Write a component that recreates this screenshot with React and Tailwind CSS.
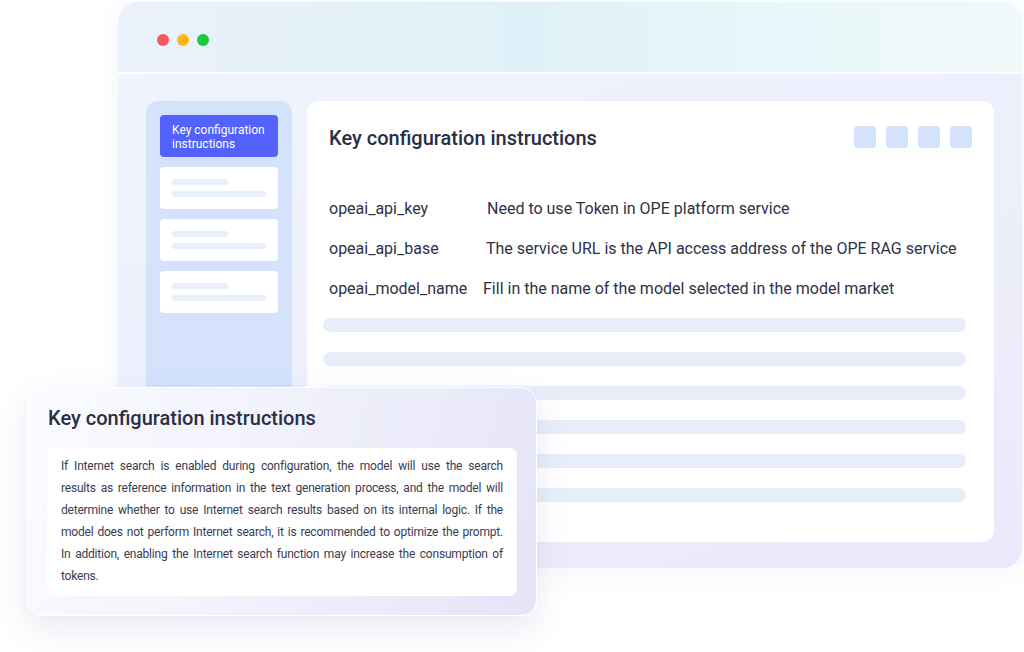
import React from "react";

const rows = [
  { k: "opeai_api_key", v: "Need to use Token in OPE platform service", w: "w-[158px]" },
  { k: "opeai_api_base", v: "The service URL is the API access address of the OPE RAG service", w: "w-[157px]" },
  { k: "opeai_model_name", v: "Fill in the name of the model selected in the model market", w: "w-[154px]" },
];

const lines = [
  "If Internet search is enabled during configuration, the model will use the search",
  "results as reference information in the text generation process, and the model will",
  "determine whether to use Internet search results based on its internal logic. If the",
  "model does not perform Internet search, it is recommended to optimize the prompt.",
  "In addition, enabling the Internet search function may increase the consumption of",
];

function SideCard() {
  return (
    <div className="h-[42px] rounded-[4px] bg-white px-[12px] pt-[12px] flex flex-col gap-[6px]">
      <div className="h-[6px] w-[56px] rounded-full bg-[#e8eefa]" />
      <div className="h-[6px] w-[94px] rounded-full bg-[#e8eefa]" />
    </div>
  );
}

export default function App() {
  return (
    <div className="relative w-[1024px] h-[652px] overflow-hidden bg-white font-['Roboto',sans-serif]">
      <div className="ml-[118px] mt-[2px] w-[904px] h-[566px] rounded-[20px] overflow-hidden flex flex-col shadow-[0_4px_24px_rgba(120,130,200,0.08)]">
        <div className="h-[72px] shrink-0 border-b-2 border-white bg-[linear-gradient(90deg,#ebf1fb_0%,#dff1f8_45%,#e8f7f9_75%,#f0f8fa_100%)] pl-[39px] pt-[32px] flex gap-[8px]">
          <div className="w-[12px] h-[12px] rounded-full bg-[#f65b5b]" />
          <div className="w-[12px] h-[12px] rounded-full bg-[#fdb913]" />
          <div className="w-[12px] h-[12px] rounded-full bg-[#1ec740]" />
        </div>
        <div className="flex-1 bg-[linear-gradient(160deg,#eff4fd_0%,#edeffc_50%,#ebe8fb_100%)] px-[28px] pt-[27px] pb-[26px] flex gap-[15px]">
          <div className="w-[146px] rounded-[12px] bg-[#d4e2fc] p-[14px] flex flex-col gap-[10px]">
            <div className="h-[42px] rounded-[4px] bg-[#5262fb] px-[12px] pt-[8px] text-[12px] leading-[14px] text-white">
              Key configuration instructions
            </div>
            <SideCard />
            <SideCard />
            <SideCard />
          </div>
          <div className="flex-1 rounded-[12px] bg-white">
            <div className="h-[24px] mt-[25px] px-[22px] flex items-center justify-between">
              <div className="text-[20px] leading-[24px] font-medium text-[#2a2e45]">Key configuration instructions</div>
              <div className="flex gap-[10px] -mt-[2px]">
                <div className="w-[22px] h-[22px] rounded-[4px] bg-[#d4e2fc]" />
                <div className="w-[22px] h-[22px] rounded-[4px] bg-[#d4e2fc]" />
                <div className="w-[22px] h-[22px] rounded-[4px] bg-[#d4e2fc]" />
                <div className="w-[22px] h-[22px] rounded-[4px] bg-[#d4e2fc]" />
              </div>
            </div>
            <div className="mt-[39px] px-[22px] flex flex-col">
              {rows.map((r) => (
                <div key={r.k} className="h-[40px] flex items-center text-[16px] text-[#2e3148]">
                  <div className={r.w + " shrink-0"}>{r.k}</div>
                  <div className="whitespace-nowrap">{r.v}</div>
                </div>
              ))}
            </div>
            <div className="mt-[9px] pl-[16px] pr-[28px] flex flex-col gap-[20px]">
              {[0, 1, 2, 3, 4, 5].map((i) => (
                <div key={i} className="h-[14px] rounded-full bg-[#e7eefa]" />
              ))}
            </div>
          </div>
        </div>
      </div>

      <div className="absolute left-[27px] top-[387px] w-[510px] h-[229px] rounded-[16px] border border-white bg-[linear-gradient(105deg,#fbfcff_0%,#f1f2fc_45%,#e5e4f8_100%)] shadow-[0_12px_32px_rgba(90,100,160,0.14)] px-[19px] pt-[18px]">
        <div className="pl-[1px] text-[20px] leading-[24px] font-medium text-[#2a2e45]">Key configuration instructions</div>
        <div className="mt-[18px] h-[148px] rounded-[8px] bg-white px-[14px] pt-[7px] text-[12px] leading-[22px] tracking-[-0.2px] text-[#393c53]">
          {lines.map((l, i) => (
            <div key={i} className="whitespace-nowrap text-justify [text-align-last:justify]">{l}</div>
          ))}
          <div>tokens.</div>
        </div>
      </div>
    </div>
  );
}
